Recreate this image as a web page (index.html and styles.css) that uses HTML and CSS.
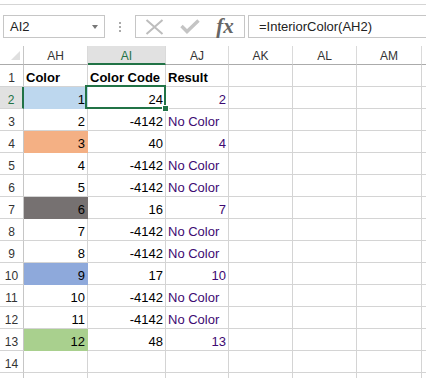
FILE: index.html
```html
<!DOCTYPE html>
<html lang="en">
<head>
  <meta charset="UTF-8" />
  <title>InteriorColor</title>
  <link rel="stylesheet" href="styles.css">
</head>
<body>
  <div class="ribbon-edge"></div>

  <div class="formula-row">
    <div class="namebox">
      <span>AI2</span>
      <span class="caret"></span>
    </div>
    <div class="dots"><i></i><i></i><i></i></div>
    <div class="fx-buttons">
      <span class="btn">
        <svg width="19" height="16" viewBox="0 0 19 16"><path d="M1.5 1 L17.5 15 M17.5 1 L1.5 15" stroke="#bdbdbd" stroke-width="2" fill="none"/></svg>
      </span>
      <span class="btn">
        <svg width="20" height="15" viewBox="0 0 20 15"><path d="M1.5 7 L7 12.5 L18.5 1.5" stroke="#c4c4c4" stroke-width="3.4" fill="none"/></svg>
      </span>
      <span class="btn fx">fx</span>
    </div>
    <div class="formula-input">=InteriorColor(AH2)</div>
  </div>

  <div class="sheet">
    <div class="corner"><span class="tri"></span></div>
    <div class="ch">AH</div>
    <div class="ch sel">AI</div>
    <div class="ch">AJ</div>
    <div class="ch">AK</div>
    <div class="ch">AL</div>
    <div class="ch">AM</div>
    <div class="ch"></div>

    <div class="rh">1</div>
    <div class="c bold">Color</div>
    <div class="c bold">Color Code</div>
    <div class="c bold">Result</div>
    <div class="c"></div><div class="c"></div><div class="c"></div><div class="c"></div>

    <div class="rh sel">2</div>
    <div class="c num fill-blue">1</div>
    <div class="c num active">24<span class="handle"></span></div>
    <div class="c num res">2</div>
    <div class="c"></div><div class="c"></div><div class="c"></div><div class="c"></div>

    <div class="rh">3</div>
    <div class="c num">2</div>
    <div class="c num">-4142</div>
    <div class="c res">No Color</div>
    <div class="c"></div><div class="c"></div><div class="c"></div><div class="c"></div>

    <div class="rh">4</div>
    <div class="c num fill-orange">3</div>
    <div class="c num">40</div>
    <div class="c num res">4</div>
    <div class="c"></div><div class="c"></div><div class="c"></div><div class="c"></div>

    <div class="rh">5</div>
    <div class="c num">4</div>
    <div class="c num">-4142</div>
    <div class="c res">No Color</div>
    <div class="c"></div><div class="c"></div><div class="c"></div><div class="c"></div>

    <div class="rh">6</div>
    <div class="c num">5</div>
    <div class="c num">-4142</div>
    <div class="c res">No Color</div>
    <div class="c"></div><div class="c"></div><div class="c"></div><div class="c"></div>

    <div class="rh">7</div>
    <div class="c num fill-gray">6</div>
    <div class="c num">16</div>
    <div class="c num res">7</div>
    <div class="c"></div><div class="c"></div><div class="c"></div><div class="c"></div>

    <div class="rh">8</div>
    <div class="c num">7</div>
    <div class="c num">-4142</div>
    <div class="c res">No Color</div>
    <div class="c"></div><div class="c"></div><div class="c"></div><div class="c"></div>

    <div class="rh">9</div>
    <div class="c num">8</div>
    <div class="c num">-4142</div>
    <div class="c res">No Color</div>
    <div class="c"></div><div class="c"></div><div class="c"></div><div class="c"></div>

    <div class="rh">10</div>
    <div class="c num fill-steel">9</div>
    <div class="c num">17</div>
    <div class="c num res">10</div>
    <div class="c"></div><div class="c"></div><div class="c"></div><div class="c"></div>

    <div class="rh">11</div>
    <div class="c num">10</div>
    <div class="c num">-4142</div>
    <div class="c res">No Color</div>
    <div class="c"></div><div class="c"></div><div class="c"></div><div class="c"></div>

    <div class="rh">12</div>
    <div class="c num">11</div>
    <div class="c num">-4142</div>
    <div class="c res">No Color</div>
    <div class="c"></div><div class="c"></div><div class="c"></div><div class="c"></div>

    <div class="rh">13</div>
    <div class="c num fill-green">12</div>
    <div class="c num">48</div>
    <div class="c num res">13</div>
    <div class="c"></div><div class="c"></div><div class="c"></div><div class="c"></div>

    <div class="rh">14</div>
    <div class="c"></div><div class="c"></div><div class="c"></div>
    <div class="c"></div><div class="c"></div><div class="c"></div><div class="c"></div>

    <div class="rh"></div>
    <div class="c"></div><div class="c"></div><div class="c"></div>
    <div class="c"></div><div class="c"></div><div class="c"></div><div class="c"></div>
  </div>
</body>
</html>
```

FILE: styles.css
```css
*, *::before, *::after { box-sizing: border-box; }

body {
  margin: 0;
  background: #fff;
  font-family: "Liberation Sans", Arial, sans-serif;
  color: #000;
  overflow: hidden;
}

.ribbon-edge {
  height: 5px;
  border-bottom: 1px solid #d5d5d5;
}

/* formula bar */
.formula-row {
  display: flex;
  height: 23px;
  margin-top: 10px;
  padding-left: 3px;
}

.namebox {
  width: 102px;
  border: 1px solid #c6c6c6;
  display: flex;
  align-items: center;
  justify-content: space-between;
  padding: 0 6px 0 6px;
  font-size: 13px;
  color: #222;
}

.caret {
  width: 0;
  height: 0;
  border-left: 3.5px solid transparent;
  border-right: 3.5px solid transparent;
  border-top: 4px solid #777;
}

.dots {
  width: 30px;
  display: flex;
  flex-direction: column;
  align-items: center;
  justify-content: center;
  gap: 2px;
}

.dots i {
  width: 2px;
  height: 2px;
  background: #aaa;
}

.fx-buttons {
  width: 110px;
  border: 1px solid #c6c6c6;
  display: flex;
}

.btn {
  width: 36px;
  display: flex;
  align-items: center;
  justify-content: center;
}

.fx {
  font-family: "Liberation Serif", "DejaVu Serif", serif;
  font-style: italic;
  font-weight: bold;
  font-size: 21px;
  color: #666;
  line-height: 21px;
  padding-right: 2px;
}

.formula-input {
  flex: 1;
  margin-left: 3px;
  margin-right: -4px;
  border: 1px solid #c6c6c6;
  font-size: 13px;
  line-height: 21px;
  padding-left: 10px;
  color: #222;
}

/* grid */
.sheet {
  margin-top: 8px;
  display: grid;
  grid-template-columns: 24px 64px 78px 63px 64px 64px 65px 1fr;
  grid-template-rows: 19px;
  grid-auto-rows: 22px;
}

.corner {
  position: relative;
  border-right: 1px solid #c6c6c6;
  border-bottom: 1px solid #ababab;
}

.corner .tri {
  position: absolute;
  right: 3px;
  bottom: 4px;
  width: 0;
  height: 0;
  border-left: 9px solid transparent;
  border-bottom: 9px solid #dfdfdf;
}

.ch {
  border-bottom: 1px solid #ababab;
  border-right: 1px solid #dadada;
  font-size: 12px;
  line-height: 14px;
  padding-top: 3px;
  text-align: center;
  color: #333;
}

.ch.sel {
  background: #e1e1e1;
  border-bottom: 2px solid #217346;
  color: #217346;
}

.rh {
  border-right: 1px solid #c6c6c6;
  border-bottom: 1px solid #d4d4d4;
  font-size: 12px;
  line-height: 14px;
  padding-top: 6px;
  text-align: center;
  color: #333;
}

.rh.sel {
  background: #e1e1e1;
  color: #217346;
  border-right: 2px solid #217346;
}

.c {
  border-right: 1px solid #d4d4d4;
  border-bottom: 1px solid #d4d4d4;
  font-size: 13px;
  line-height: 14px;
  padding: 6px 2px 0 2px;
  white-space: nowrap;
  overflow: visible;
}

.bold { font-weight: bold; }
.num { text-align: right; }
.res { color: #3d0a72; }

.fill-blue { background: #bdd7ee; border-color: #bdd7ee; }
.fill-orange { background: #f4b084; border-color: #f4b084; }
.fill-gray { background: #767171; border-color: #767171; }
.fill-steel { background: #8ea9db; border-color: #8ea9db; }
.fill-green { background: #a9d08e; border-color: #a9d08e; }

.active {
  position: relative;
}

.active::after {
  content: "";
  position: absolute;
  left: -3px;
  top: -2px;
  right: -1px;
  bottom: -1px;
  border: 2px solid #217346;
}

.handle {
  position: absolute;
  right: -4px;
  bottom: -4px;
  width: 7px;
  height: 7px;
  background: #217346;
  border: 1px solid #fff;
  z-index: 1;
}
```
